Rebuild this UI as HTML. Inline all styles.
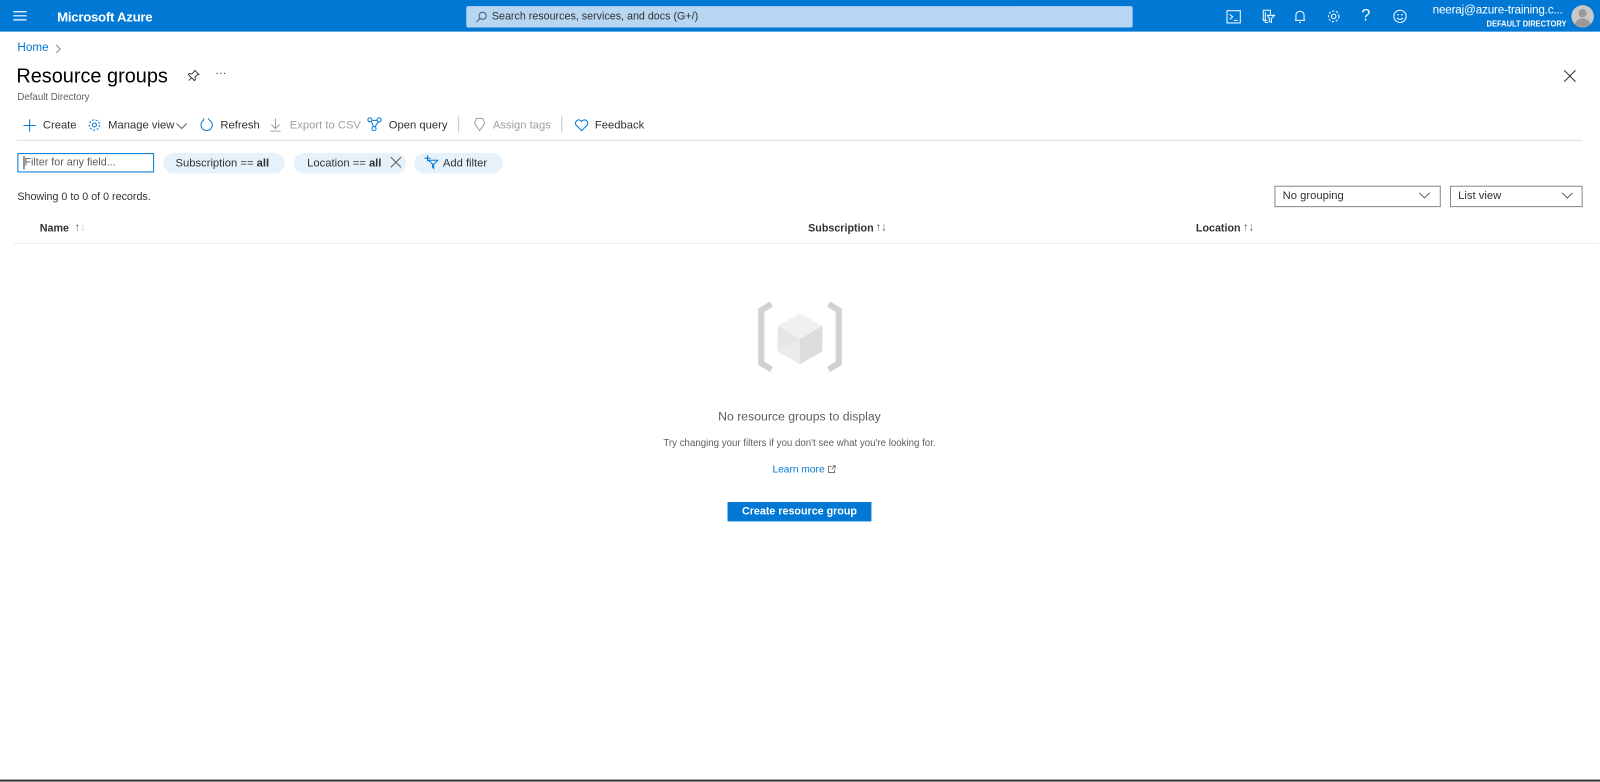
<!DOCTYPE html>
<html><head><meta charset="utf-8"><style>
*{box-sizing:border-box;margin:0;padding:0}
body{width:1600px;height:782px;overflow:hidden;background:#fff;font-family:"Liberation Sans",sans-serif;color:#323130;position:relative;font-size:11px}
#w{position:absolute;left:0;top:0;width:1568px;height:766px;transform:scale(1.0204);transform-origin:0 0}
.a{position:absolute;white-space:nowrap}
.hdr{position:absolute;left:0;top:0;width:1568px;height:31px;background:#0078d4}
.pill{position:absolute;height:20px;border-radius:10px;background:#e5f1fb;font-size:11px;line-height:20px;color:#323130}
.sel{position:absolute;height:21px;border:1px solid #8a8886;background:#fff;font-size:11px;line-height:19px;padding-left:7px}
svg{position:absolute;overflow:visible}
</style></head><body><div id="w">
<div class="hdr"></div>
<svg style="left:13px;top:10px" width="14" height="12"><path d="M0 1.5H13M0 5.5H13M0 9.5H13" stroke="#fff" stroke-width="1.2"/></svg>
<div class="a" style="left:56px;top:9px;color:#fff;font-size:13px;font-weight:bold;letter-spacing:-0.3px">Microsoft Azure</div>
<div class="a" style="left:457px;top:6px;width:653px;height:21px;background:#b7d6f1;border-radius:2px"></div>
<svg style="left:466px;top:11px" width="12" height="12"><circle cx="7" cy="4.5" r="3.5" fill="none" stroke="#40587c" stroke-width="1"/><path d="M4.5 7L1 10.5" stroke="#40587c" stroke-width="1"/></svg>
<div class="a" style="left:482px;top:10px;color:#323130;font-size:10.5px">Search resources, services, and docs (G+/)</div>
<svg style="left:1202px;top:10px" width="14" height="13"><rect x="0.5" y="0.5" width="13" height="12" fill="none" stroke="#fff"/><path d="M3 4l3 2.5L3 9M7 10h4" stroke="#fff" fill="none"/></svg>
<svg style="left:1236px;top:9px" width="14" height="15"><path d="M2 1h7v4M2 1v10h4M4 3v10h3M6 6h7l-3 3v4l-2-1V9z" stroke="#fff" fill="none"/></svg>
<svg style="left:1268px;top:9px" width="12" height="15"><path d="M2 11V6a4 4 0 018 0v5zM1 11h10M5 13h2" stroke="#fff" fill="none"/></svg>
<svg style="left:1300px;top:9px" width="14" height="14"><circle cx="7" cy="7" r="2.2" fill="none" stroke="#fff"/><circle cx="7" cy="7" r="5.2" fill="none" stroke="#fff" stroke-dasharray="2.2 1.6"/></svg>
<div class="a" style="left:1334px;top:7px;color:#fff;font-size:16px">?</div>
<svg style="left:1365px;top:9px" width="14" height="14"><circle cx="7" cy="7" r="6" fill="none" stroke="#fff"/><circle cx="5" cy="5.5" r=".8" fill="#fff"/><circle cx="9" cy="5.5" r=".8" fill="#fff"/><path d="M4 8.5q3 3 6 0" stroke="#fff" fill="none"/></svg>
<div class="a" style="left:1404px;top:4px;width:130px;color:#fff;font-size:11.5px;overflow:hidden;letter-spacing:-0.2px">neeraj@azure-training.c...</div>
<div class="a" style="right:33px;top:19px;color:#fff;font-size:8px;font-weight:bold;transform:scaleX(0.92);transform-origin:100% 0">DEFAULT DIRECTORY</div>
<div class="a" style="left:1540px;top:5px;width:22px;height:22px;border-radius:50%;background:#c8c8c8;overflow:hidden"><div style="position:absolute;left:7px;top:4px;width:8px;height:8px;border-radius:50%;background:#999"></div><div style="position:absolute;left:3px;top:13px;width:16px;height:12px;border-radius:8px 8px 0 0;background:#999"></div></div>
<div class="a" style="left:17px;top:41px;color:#0078d4;font-size:11.5px">Home</div>
<svg style="left:54px;top:44px" width="6" height="8"><path d="M1 0l4 4-4 4" stroke="#8a8886" fill="none"/></svg>
<div class="a" style="left:16px;top:64px;font-size:19.5px;color:#000">Resource groups</div>
<svg style="left:184px;top:68px" width="12" height="12"><path d="M7 1l4 4-2 .5-2 2 .5 2.5-1 1-6-6 1-1 2.5.5 2-2zM4 8L1 11" stroke="#323130" fill="none" stroke-width=".9"/></svg>
<div class="a" style="left:211px;top:66px;font-size:11px">···</div>
<div class="a" style="left:17px;top:90px;font-size:9.5px;color:#605e5c">Default Directory</div>
<svg style="left:1533px;top:69px" width="11" height="11"><path d="M0 0L11 11M11 0L0 11" stroke="#323130"/></svg>
<svg style="left:23px;top:117px" width="12" height="12"><path d="M6 0v12M0 6h12" stroke="#0078d4"/></svg>
<div class="a" style="left:42px;top:117px;font-size:11px">Create</div>
<svg style="left:86px;top:116px" width="13" height="13"><circle cx="6.5" cy="6.5" r="2" fill="none" stroke="#0078d4"/><circle cx="6.5" cy="6.5" r="5" fill="none" stroke="#0078d4" stroke-dasharray="2 1.5"/></svg>
<div class="a" style="left:106px;top:117px;font-size:11px">Manage view</div>
<svg style="left:173px;top:121px" width="10" height="6"><path d="M0 0l5 5 5-5" stroke="#605e5c" fill="none"/></svg>
<svg style="left:196px;top:116px" width="13" height="13"><path d="M4 1.5A5.5 5.5 0 109 1.5" stroke="#0078d4" fill="none"/><path d="M9 1.5l-1-1.5M4 1.5L3 0" stroke="#0078d4"/></svg>
<div class="a" style="left:216px;top:117px;font-size:11px">Refresh</div>
<svg style="left:265px;top:116px" width="10" height="13"><path d="M5 0v10M1 6l4 4 4-4M0 12.5h10" stroke="#a19f9d" fill="none"/></svg>
<div class="a" style="left:284px;top:117px;font-size:11px;color:#a19f9d">Export to CSV</div>
<svg style="left:360px;top:115px" width="14" height="14"><circle cx="2.5" cy="2.5" r="2" fill="none" stroke="#0078d4"/><circle cx="11.5" cy="2.5" r="2" fill="none" stroke="#0078d4"/><circle cx="6.5" cy="11" r="2" fill="none" stroke="#0078d4"/><path d="M4 4l2 5M9.5 3l-5 0M10.5 4.5l-3 5" stroke="#0078d4"/></svg>
<div class="a" style="left:381px;top:117px;font-size:11px">Open query</div>
<div class="a" style="left:449px;top:114px;width:1px;height:16px;background:#c8c6c4"></div>
<svg style="left:464px;top:115px" width="12" height="14"><path d="M3 1l6 0 2 5-5 7-5-7z" stroke="#a19f9d" fill="none"/></svg>
<div class="a" style="left:483px;top:117px;font-size:11px;color:#a19f9d">Assign tags</div>
<div class="a" style="left:550px;top:114px;width:1px;height:16px;background:#c8c6c4"></div>
<svg style="left:563px;top:117px" width="14" height="12"><path d="M7 11L1.5 5.5A3 3 0 017 2a3 3 0 015.5 3.5z" stroke="#0078d4" fill="none"/></svg>
<div class="a" style="left:583px;top:117px;font-size:11px">Feedback</div>
<div class="a" style="left:16px;top:137px;width:1535px;height:1px;background:#e1dfdd"></div>
<div class="a" style="left:17px;top:150px;width:134px;height:19px;border:1px solid #0078d4;background:#fff"></div>
<div class="a" style="left:23px;top:153px;width:1px;height:13px;background:#323130"></div>
<div class="a" style="left:24px;top:153px;font-size:10.5px;color:#605e5c">Filter for any field...</div>
<div class="pill" style="left:160px;top:150px;width:119px;padding-left:12px">Subscription == <b>all</b></div>
<div class="pill" style="left:288px;top:150px;width:110px;padding-left:13px">Location == <b>all</b></div>
<svg style="left:383px;top:154px" width="10" height="10"><path d="M0 0l10 10M10 0L0 10" stroke="#605e5c"/></svg>
<div class="pill" style="left:406px;top:150px;width:87px;padding-left:28px">Add filter</div>
<svg style="left:416px;top:152px" width="14" height="14"><path d="M3 0v6M0 3h6" stroke="#0078d4"/><path d="M4 5h9l-4 4v4l-1-1V9z" stroke="#0078d4" fill="none"/></svg>
<div class="a" style="left:17px;top:187px;font-size:10.5px">Showing 0 to 0 of 0 records.</div>
<div class="sel" style="left:1249px;top:182px;width:163px">No grouping</div>
<svg style="left:1391px;top:189px" width="10" height="6"><path d="M0 0l5 5 5-5" stroke="#605e5c" fill="none"/></svg>
<div class="sel" style="left:1421px;top:182px;width:130px">List view</div>
<svg style="left:1531px;top:189px" width="10" height="6"><path d="M0 0l5 5 5-5" stroke="#605e5c" fill="none"/></svg>
<div class="a" style="left:39px;top:218px;font-size:10.5px;font-weight:bold;color:#323130">Name</div>
<div class="a" style="left:73px;top:217px;font-size:11px;color:#605e5c">↑<span style="color:#c8c6c4">↓</span></div>
<div class="a" style="left:792px;top:218px;font-size:10.5px;font-weight:bold">Subscription</div>
<div class="a" style="left:858px;top:217px;font-size:11px;color:#605e5c">↑↓</div>
<div class="a" style="left:1172px;top:218px;font-size:10.5px;font-weight:bold">Location</div>
<div class="a" style="left:1218px;top:217px;font-size:11px;color:#605e5c">↑↓</div>
<div class="a" style="left:13px;top:238px;width:1554px;height:1px;background:#edebe9"></div>
<svg style="left:744px;top:298px" width="80" height="64">
<path d="M12 0L2 6v52l10 6" stroke="#d2d2d2" stroke-width="6" fill="none"/>
<path d="M68 0l10 6v52l-10 6" stroke="#d2d2d2" stroke-width="6" fill="none"/>
<path d="M40 9l22 12.5L40 34 18 21.5z" fill="#f0f0f0"/>
<path d="M18 21.5L40 34v25L18 46.5z" fill="#e6e6e6"/>
<path d="M62 21.5L40 34v25l22-12.5z" fill="#dcdcdc"/>
<path d="M40 34L18 46.5 40 59z" fill="#ebebeb"/>
</svg>
<div class="a" style="left:0;width:1567px;top:401px;text-align:center;font-size:12px;color:#605e5c">No resource groups to display</div>
<div class="a" style="left:0;width:1567px;top:429px;text-align:center;font-size:9.5px;color:#605e5c">Try changing your filters if you don't see what you're looking for.</div>
<div class="a" style="left:757px;top:455px;font-size:10px;color:#0078d4">Learn more</div>
<svg style="left:811px;top:456px" width="8" height="8"><path d="M4 1H1v6h6V4M4 4l3.5-3.5M5 .5h2.5V3" stroke="#605e5c" fill="none" stroke-width=".8"/></svg>
<div class="a" style="left:713px;top:492px;width:141px;height:19px;background:#0078d4;color:#fff;font-size:10.5px;font-weight:bold;text-align:center;line-height:19px">Create resource group</div>
<div class="a" style="left:0;top:764px;width:1568px;height:2px;background:#333"></div>
</div></body></html>
